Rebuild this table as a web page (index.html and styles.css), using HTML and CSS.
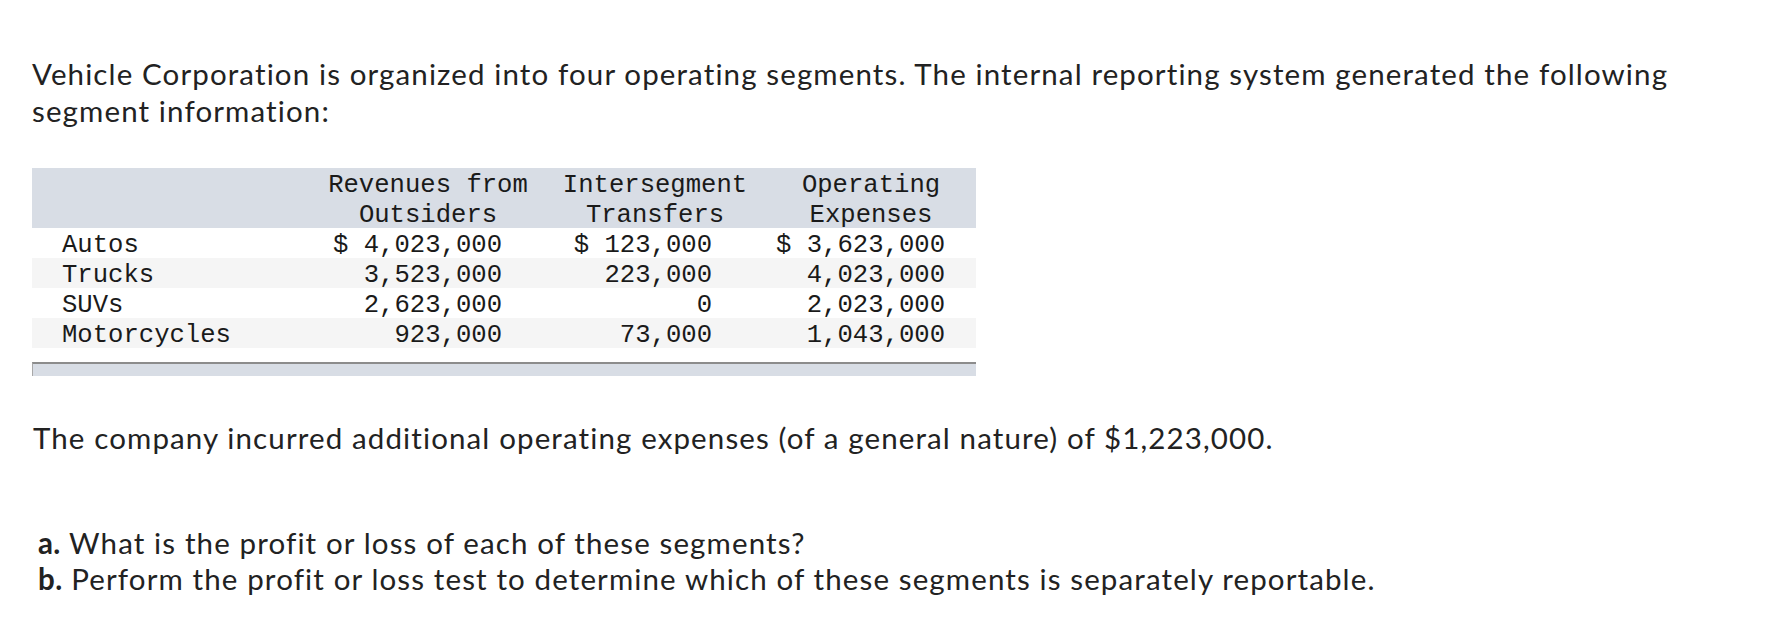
FILE: index.html
```html
<!DOCTYPE html>
<html lang="en">
<head>
<meta charset="utf-8">
<title>Vehicle Corporation segments</title>
<link rel="stylesheet" href="styles.css">
</head>
<body>
<main class="page">
  <p class="intro">Vehicle Corporation is organized into four operating segments. The internal reporting system generated the following segment information:</p>
  <div class="table-wrap">
    <table class="seg">
      <colgroup>
        <col class="c-label">
        <col class="c-rev">
        <col class="c-trans">
        <col class="c-exp">
      </colgroup>
      <thead>
        <tr>
          <th></th>
          <th><span>Revenues from<br>Outsiders</span></th>
          <th><span>Intersegment<br>Transfers</span></th>
          <th><span>Operating<br>Expenses</span></th>
        </tr>
      </thead>
      <tbody>
        <tr>
          <td class="label"><span>Autos</span></td>
          <td class="rev"><span>$ 4,023,000</span></td>
          <td class="trans"><span>$ 123,000</span></td>
          <td class="exp"><span>$ 3,623,000</span></td>
        </tr>
        <tr class="alt">
          <td class="label"><span>Trucks</span></td>
          <td class="rev"><span>3,523,000</span></td>
          <td class="trans"><span>223,000</span></td>
          <td class="exp"><span>4,023,000</span></td>
        </tr>
        <tr>
          <td class="label"><span>SUVs</span></td>
          <td class="rev"><span>2,623,000</span></td>
          <td class="trans"><span>0</span></td>
          <td class="exp"><span>2,023,000</span></td>
        </tr>
        <tr class="alt">
          <td class="label"><span>Motorcycles</span></td>
          <td class="rev"><span>923,000</span></td>
          <td class="trans"><span>73,000</span></td>
          <td class="exp"><span>1,043,000</span></td>
        </tr>
      </tbody>
    </table>
    <div class="table-foot"></div>
  </div>
  <p class="note">The company incurred additional operating expenses (of a general nature) of $1,223,000.</p>
  <div class="questions">
    <p><b>a.</b> What is the profit or loss of each of these segments?</p>
    <p><b>b.</b> Perform the profit or loss test to determine which of these segments is separately reportable.</p>
  </div>
</main>
</body>
</html>
```
FILE: styles.css
```css
html, body {
  margin: 0;
  padding: 0;
  background: #ffffff;
}

.page {
  padding: 0 32px;
  font-family: "Lato", "Noto Sans", sans-serif;
  font-size: 29.5px;
  letter-spacing: 1.12px;
  line-height: 36.5px;
  color: #222222;
}

.intro {
  margin: 0;
  padding-top: 56px;
  max-width: 1720px;
}

.table-wrap {
  width: 944px;
  margin-top: 39px;
}

.seg {
  width: 944px;
  table-layout: fixed;
  border-collapse: collapse;
  font-family: "Liberation Mono", "Courier New", monospace;
  font-size: 25.6px;
  letter-spacing: 0;
  line-height: 30px;
  color: #1a1a1a;
}

.seg span {
  line-height: 24px;
  vertical-align: -3px;
}

.c-label { width: 280px; }
.c-rev { width: 232px; }
.c-trans { width: 222px; }
.c-exp { width: 210px; }

.seg thead tr {
  background: #d8dde5;
}

.seg th {
  font-weight: normal;
  text-align: center;
  padding: 0;
  white-space: nowrap;
}

.seg td {
  padding: 0;
  white-space: nowrap;
}

.seg tr.alt {
  background: #f5f5f5;
}

.seg .label {
  text-align: left;
  padding-left: 30px;
}

.seg .rev {
  text-align: right;
  padding-right: 42px;
}

.seg .trans {
  text-align: right;
  padding-right: 54px;
}

.seg .exp {
  text-align: right;
  padding-right: 31px;
}

.table-foot {
  margin-top: 14px;
  height: 12px;
  background: #d8dde5;
  border-top: 2px solid #8c8c8c;
  border-left: 1px solid #a8a8a8;
}

.note {
  margin: 44px 0 0;
  padding-left: 1px;
}

.questions {
  margin-top: 68px;
  padding-left: 6px;
}

.questions p {
  margin: 0;
}

.questions b {
  font-weight: 700;
  letter-spacing: 0.4px;
}
```
